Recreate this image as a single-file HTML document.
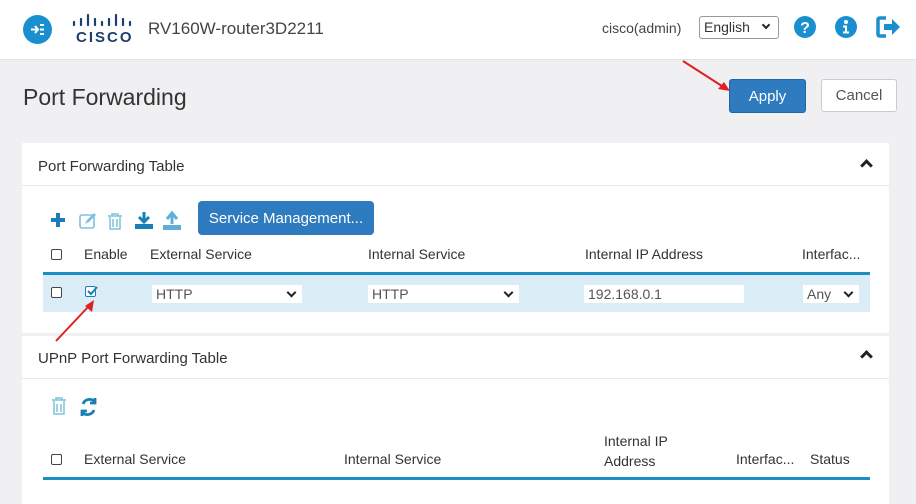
<!DOCTYPE html>
<html><head><style>
*{margin:0;padding:0;box-sizing:border-box}
body{width:916px;height:504px;overflow:hidden;background:#f0f0f2;font-family:"Liberation Sans",sans-serif;color:#333;position:relative}
.a{position:absolute;white-space:nowrap}
.btn{display:flex;align-items:center;justify-content:center}
.hdr{position:absolute;left:0;top:0;width:916px;height:60px;background:#fff;border-bottom:1px solid #e2e2e2}
.card{position:absolute;left:22px;width:867px;background:#fff}
.div{position:absolute;left:22px;width:867px;height:1px;background:#e8e8e8}
.cb{position:absolute;width:11px;height:11px;border:1px solid #444;border-radius:2px;background:#fff}
.sel{position:absolute;height:18px;background:#fff;font-size:14px;color:#555;padding:1px 4px;line-height:16px}
.chev{position:absolute;width:7px;height:7px;border-right:2.5px solid #222;border-bottom:2.5px solid #222;transform:rotate(45deg)}
.up{position:absolute;width:9px;height:9px;border-left:3px solid #222;border-top:3px solid #222;transform:rotate(45deg)}
.th{font-size:14px;color:#333}
</style></head><body>
<div class="hdr"></div>
<div class="a" style="left:23px;top:15px;width:29px;height:29px;border-radius:50%;background:#1a8fd0"></div>
<svg class="a" style="left:29px;top:21px" width="17" height="17" viewBox="0 0 17 17" fill="none" stroke="#fff" stroke-width="2"><path d="M2 8.5h7M6 5l3 3.5-3 3.5M11 4h4M11 8.5h4M11 13h4"/></svg>
<svg class="a" style="left:72px;top:13px" width="60" height="16" viewBox="0 0 60 16" stroke="#1c3f6e" stroke-width="2.2" stroke-linecap="round"><path d="M2 9v3M9 6v6M16 2v10M23 6v6M30 9v3M37 6v6M44 2v10M51 6v6M58 9v3"/></svg>
<div class="a" style="left:76px;top:29px;font-size:15px;font-weight:bold;color:#1c3f6e;letter-spacing:2px">CISCO</div>
<div class="a" style="left:148px;top:19px;font-size:17px;color:#444">RV160W-router3D2211</div>
<div class="a" style="left:602px;top:20px;font-size:14px;color:#444">cisco(admin)</div>
<div class="a" style="left:699px;top:16px;width:80px;height:23px;border:1px solid #999;border-radius:3px;background:#fff;font-size:14px;padding:2px 4px;color:#333">English</div>
<div class="chev" style="left:763px;top:22px;width:6px;height:6px"></div>
<svg class="a" style="left:794px;top:16px" width="22" height="22" viewBox="0 0 22 22"><circle cx="11" cy="11" r="11" fill="#1a8fd0"/><text x="11" y="17" text-anchor="middle" font-family="Liberation Sans" font-weight="bold" font-size="16" fill="#fff">?</text></svg>
<svg class="a" style="left:835px;top:16px" width="22" height="22" viewBox="0 0 22 22"><circle cx="11" cy="11" r="11" fill="#1a8fd0"/><circle cx="11" cy="6" r="2" fill="#fff"/><path d="M8 9.5h4v6h2v2H8v-2h2v-4H8z" fill="#fff"/></svg>
<svg class="a" style="left:876px;top:16px" width="25" height="22" viewBox="0 0 25 22"><path d="M10 2H4Q2 2 2 4v14q0 2 2 2h6" fill="none" stroke="#1a8fd0" stroke-width="3.5"/><path d="M8 8h8V3l8 8-8 8v-5H8z" fill="#1a8fd0"/></svg>
<div class="a" style="left:23px;top:84px;font-size:23px;color:#333">Port Forwarding</div>
<div class="a btn" style="left:729px;top:79px;width:77px;height:34px;background:#2f7bbf;border:1px solid #25659f;border-radius:3px;color:#fff;font-size:15px">Apply</div>
<div class="a btn" style="left:821px;top:79px;width:76px;height:33px;background:#fff;border:1px solid #ccc;border-radius:3px;color:#555;font-size:15px">Cancel</div>
<svg class="a" style="left:680px;top:58px" width="52" height="36"><path d="M3 3L45 30" stroke="#e02020" stroke-width="2"/><path d="M50 33L38 31L44 24z" fill="#e02020"/></svg>
<div class="card" style="top:143px;height:190px"></div>
<div class="card" style="top:336px;height:168px"></div>
<div class="div" style="top:185px"></div>
<div class="div" style="top:378px"></div>
<div class="a" style="left:38px;top:158px;font-size:15px">Port Forwarding Table</div>
<div class="up" style="left:862px;top:161px"></div>
<div class="a" style="left:38px;top:350px;font-size:15px">UPnP Port Forwarding Table</div>
<div class="up" style="left:862px;top:352px"></div>
<svg class="a" style="left:50px;top:210px" width="140" height="22"><path d="M8 3v14M1 10h14" stroke="#1a7fb8" stroke-width="4"/><rect x="30" y="5" width="14" height="13" rx="2" fill="none" stroke="#7ec0dd" stroke-width="1.6"/><path d="M35 14l2-4 7-7 2 2-7 7z" fill="#7ec0dd"/><path d="M58 6h14M62 6V4h6v2M60 7v12h10V7M63 9v8M67 9v8" fill="none" stroke="#7ec0dd" stroke-width="1.5"/><path d="M94 2v9M89 7l5 5 5-5" stroke="#1a7fb8" stroke-width="3" fill="none"/><path d="M85 14h18v5H85z" fill="#1a7fb8"/><path d="M122 14V4M117 9l5-6 5 6" stroke="#5fb0d6" stroke-width="3" fill="none"/><path d="M113 15h18v5h-18z" fill="#5fb0d6"/></svg>
<div class="a btn" style="left:198px;top:201px;width:176px;height:34px;background:#2f7bbf;border-radius:4px;color:#fff;font-size:15px">Service Management...</div>
<div class="cb" style="left:51px;top:249px"></div>
<div class="a th" style="left:84px;top:246px">Enable</div>
<div class="a th" style="left:150px;top:246px">External Service</div>
<div class="a th" style="left:368px;top:246px">Internal Service</div>
<div class="a th" style="left:585px;top:246px">Internal IP Address</div>
<div class="a th" style="left:802px;top:246px">Interfac...</div>
<div class="a" style="left:43px;top:272px;width:827px;height:3px;background:#1c8ec4"></div>
<div class="a" style="left:43px;top:275px;width:827px;height:37px;background:#daedf7"></div>
<div class="cb" style="left:51px;top:287px"></div>
<div class="cb" style="left:85px;top:286px;border-color:#1a7fb8"></div>
<svg class="a" style="left:86px;top:285px" width="12" height="11"><path d="M2 6l3 3 6-7" stroke="#1a7fb8" stroke-width="2" fill="none"/></svg>
<div class="sel" style="left:152px;top:285px;width:150px">HTTP</div><div class="chev" style="left:288px;top:289px"></div>
<div class="sel" style="left:368px;top:285px;width:151px">HTTP</div><div class="chev" style="left:505px;top:289px"></div>
<div class="sel" style="left:584px;top:285px;width:160px">192.168.0.1</div>
<div class="sel" style="left:803px;top:285px;width:56px">Any</div><div class="chev" style="left:845px;top:289px"></div>
<svg class="a" style="left:52px;top:295px" width="46" height="50"><path d="M4 46L36 12" stroke="#e02020" stroke-width="2"/><path d="M42 5L40 17L33 11z" fill="#e02020"/></svg>
<svg class="a" style="left:50px;top:396px" width="50" height="22"><path d="M2 4h14M6 4V2h6v2M4 5v13h10V5M7 8v8M11 8v8" fill="none" stroke="#7ec0dd" stroke-width="1.5"/><path d="M33 8a7 7 0 0 1 12-2M45 2v5h-5M44 14a7 7 0 0 1-12 2M32 20v-5h5" fill="none" stroke="#1a7fb8" stroke-width="2.8"/></svg>
<div class="cb" style="left:51px;top:454px"></div>
<div class="a th" style="left:84px;top:451px">External Service</div>
<div class="a th" style="left:344px;top:451px">Internal Service</div>
<div class="a th" style="left:604px;top:431px;line-height:20px">Internal IP<br>Address</div>
<div class="a th" style="left:736px;top:451px">Interfac...</div>
<div class="a th" style="left:810px;top:451px">Status</div>
<div class="a" style="left:43px;top:477px;width:827px;height:3px;background:#1c8ec4"></div>
</body></html>
